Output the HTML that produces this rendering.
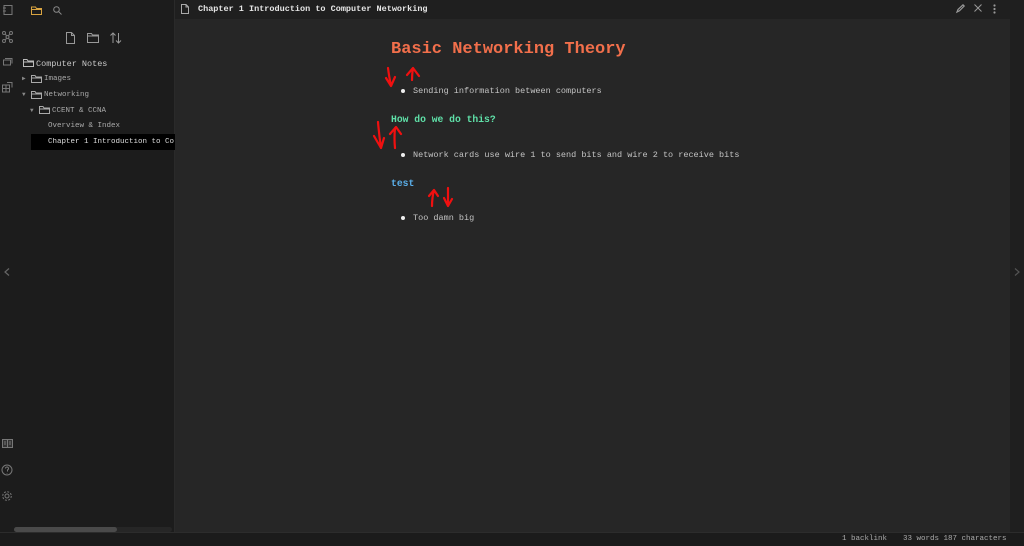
<!DOCTYPE html>
<html><head><meta charset="utf-8"><style>
*{margin:0;padding:0;box-sizing:border-box}
body{width:1024px;height:546px;overflow:hidden;background:#262626;font-family:"Liberation Mono",monospace;position:relative;color:#ccc}
.abs{position:absolute}
.rib{left:0;top:0;width:17px;height:532px;background:#1c1c1c}
.side{left:17px;top:0;width:158px;height:532px;background:#1c1c1c;border-right:1px solid #2a2a2a}
.head{left:175px;top:0;width:835px;height:19px;background:#1f1f1f}
.rstrip{left:1010px;top:0;width:14px;height:532px;background:#1f1f1f}
.status{left:0;top:532px;width:1024px;height:14px;background:#1b1b1b;border-top:1px solid #2c2c2c}
.t{position:absolute;white-space:nowrap;font-size:8.5px;color:#bdbdbd}
svg{position:absolute;overflow:visible}
</style></head><body>
<div class="abs rib"></div>
<div class="abs side"></div>
<div class="abs head"></div>
<div class="abs rstrip"></div>
<div class="abs status"></div>

<!-- ribbon icons -->
<svg style="left:3px;top:5px" width="10" height="10" fill="none" stroke="#777" stroke-width="1"><rect x="1" y="0.5" width="8" height="9"/><path d="M0 3h3M0 6h3"/></svg>
<svg style="left:2px;top:31px" width="11" height="11" fill="none" stroke="#777" stroke-width="1"><circle cx="2" cy="2" r="1.5"/><circle cx="9" cy="2" r="1.5"/><circle cx="5.5" cy="6" r="1.5"/><circle cx="2" cy="10" r="1.5"/><circle cx="9" cy="10" r="1.5"/><path d="M3 3l2 2M8 3l-2 2M3 9l2-2M8 9l-2-2"/></svg>
<svg style="left:3px;top:57px" width="10" height="9" fill="none" stroke="#777" stroke-width="1"><rect x="0.5" y="3" width="7" height="5"/><path d="M2 1.5h7v5"/></svg>
<svg style="left:2px;top:82px" width="11" height="11" fill="none" stroke="#777" stroke-width="1"><rect x="0.5" y="3" width="7" height="7"/><path d="M0.5 6.5h7M4 3v7M5 0.5h5v5"/></svg>
<svg style="left:2px;top:439px" width="11" height="9" fill="none" stroke="#777" stroke-width="1"><rect x="0.5" y="0.5" width="10" height="8" fill="#333"/><path d="M5.5 1v7M2 3h2M2 5h2M7 3h2M7 5h2"/></svg>
<svg style="left:1px;top:464px" width="12" height="12" fill="none" stroke="#777" stroke-width="1"><circle cx="6" cy="6" r="5"/><path d="M4.5 4.5a1.5 1.5 0 1 1 2 1.4V7.5M6 9v0.5"/></svg>
<svg style="left:1px;top:490px" width="12" height="12" fill="none" stroke="#777" stroke-width="1"><circle cx="6" cy="6" r="2"/><circle cx="6" cy="6" r="4.3" stroke-dasharray="2 1.4"/></svg>
<svg style="left:4px;top:268px" width="6" height="8" fill="none" stroke="#666" stroke-width="1.2"><path d="M5 0.5L1 4l4 3.5"/></svg>
<svg style="left:1014px;top:268px" width="6" height="8" fill="none" stroke="#555" stroke-width="1.2"><path d="M1 0.5L5 4 1 7.5"/></svg>

<!-- sidebar top -->
<svg style="left:31px;top:6px" width="11" height="9" fill="none" stroke="#d9a441" stroke-width="1"><path d="M0.5 1h4l1 1.5h5v6h-10z"/><path d="M0.5 3.5h10"/></svg>
<svg style="left:53px;top:6px" width="9" height="9" fill="none" stroke="#888" stroke-width="1"><circle cx="3.5" cy="3.5" r="2.8"/><path d="M5.5 5.5l3 3"/></svg>
<svg style="left:66px;top:32px" width="9" height="12" fill="none" stroke="#999" stroke-width="1"><path d="M0.5 0.5h5l3 3v8h-8z M5.5 0.5v3h3"/></svg>
<svg style="left:87px;top:33px" width="12" height="10" fill="none" stroke="#999" stroke-width="1"><path d="M0.5 0.5h4l1 1.5h6v7.5h-11z M0.5 3h11"/></svg>
<svg style="left:110px;top:32px" width="12" height="12" fill="none" stroke="#999" stroke-width="1"><path d="M3 11V1M0.5 3.5L3 1l2.5 2.5M8.5 1v10M6 8.5L8.5 11 11 8.5"/></svg>

<svg style="left:23px;top:59px" width="11" height="8" fill="none" stroke="#bbb" stroke-width="1"><path d="M0.5 0.5h3.5l1 1.5h5.5v5.5h-10z M0.5 3h10"/></svg>
<div class="t" style="left:36px;top:59px;color:#c8c8c8">Computer Notes</div>
<div class="t" style="left:22px;top:75px;font-size:6px;color:#888">▶</div>
<svg style="left:31px;top:75px" width="11" height="8" fill="none" stroke="#aaa" stroke-width="1"><path d="M0.5 0.5h3.5l1 1.5h5.5v5.5h-10z M0.5 3h10"/></svg>
<div class="t" style="left:44px;top:75px;font-size:7.5px;color:#aaa">Images</div>
<div class="t" style="left:22px;top:91px;font-size:6px;color:#888">▼</div>
<svg style="left:31px;top:91px" width="11" height="8" fill="none" stroke="#aaa" stroke-width="1"><path d="M0.5 0.5h3.5l1 1.5h5.5v5.5h-10z M0.5 3h10"/></svg>
<div class="t" style="left:44px;top:91px;font-size:7.5px;color:#aaa">Networking</div>
<div class="t" style="left:30px;top:107px;font-size:6px;color:#888">▼</div>
<svg style="left:39px;top:106px" width="11" height="8" fill="none" stroke="#aaa" stroke-width="1"><path d="M0.5 0.5h3.5l1 1.5h5.5v5.5h-10z M0.5 3h10"/></svg>
<div class="t" style="left:52px;top:107px;font-size:7.5px;color:#aaa">CCENT &amp; CCNA</div>
<div class="t" style="left:48px;top:122px;font-size:7.5px;color:#aaa">Overview &amp; Index</div>
<div class="abs" style="left:31px;top:134px;width:144px;height:16px;background:#000"></div>
<div class="t" style="left:48px;top:138px;font-size:7.5px;color:#ddd;width:126px;overflow:hidden">Chapter 1 Introduction to Computer</div>
<div class="abs" style="left:14px;top:527px;width:158px;height:5px;background:#262626;border-radius:3px"></div>
<div class="abs" style="left:14px;top:527px;width:103px;height:5px;background:#4a4a4a;border-radius:3px"></div>

<!-- header -->
<svg style="left:181px;top:4px" width="8" height="10" fill="none" stroke="#aaa" stroke-width="1"><path d="M0.5 0.5h4.5l2.5 2.5v6.5h-7z M5 0.5v2.5h2.5"/></svg>
<div class="t" style="left:198px;top:4px;font-weight:bold;color:#e6e6e6">Chapter 1 Introduction to Computer Networking</div>
<svg style="left:956px;top:4px" width="9" height="9" fill="none" stroke="#999" stroke-width="1.2"><path d="M1 8l1-2.5L7 0.8l1.2 1.2L3.5 6.8z"/></svg>
<svg style="left:974px;top:4px" width="8" height="8" fill="none" stroke="#999" stroke-width="1"><path d="M0.5 0.5l7 7M7.5 0.5l-7 7"/></svg>
<svg style="left:993px;top:4px" width="3" height="10" fill="#999"><circle cx="1.5" cy="1.5" r="1.1"/><circle cx="1.5" cy="5" r="1.1"/><circle cx="1.5" cy="8.5" r="1.1"/></svg>

<!-- content -->
<div class="t" style="left:391px;top:40px;font-size:17px;font-weight:bold;color:#f26f4b">Basic Networking Theory</div>
<div class="abs" style="left:401px;top:89px;width:4px;height:4px;border-radius:50%;background:#eee"></div>
<div class="t" style="left:413px;top:86px;color:#c4c4c4">Sending information between computers</div>
<div class="t" style="left:391px;top:114px;font-size:9.7px;font-weight:bold;color:#5fe0a8">How do we do this?</div>
<div class="abs" style="left:401px;top:153px;width:4px;height:4px;border-radius:50%;background:#eee"></div>
<div class="t" style="left:413px;top:150px;color:#c4c4c4">Network cards use wire 1 to send bits and wire 2 to receive bits</div>
<div class="t" style="left:391px;top:178px;font-size:9.7px;font-weight:bold;color:#5aaee8">test</div>
<div class="abs" style="left:401px;top:216px;width:4px;height:4px;border-radius:50%;background:#eee"></div>
<div class="t" style="left:413px;top:213px;color:#c4c4c4">Too damn big</div>

<!-- red arrows -->
<svg style="left:0;top:0" width="1024" height="546" fill="none" stroke="#f01010" stroke-width="2.2" stroke-linecap="round" stroke-linejoin="round">
<path d="M388 68q1 8 3 18M386 78l5 8 4-9"/>
<path d="M412 80q0-6 1-12M407 75l6-7 6 8"/>
<path d="M378 122q1 12 3 26M374 136l7 12 3-10"/>
<path d="M395 148q-1-10 0-20M390 134l6-7 5 7"/>
<path d="M432 206q0-8 2-16M429 196l5-6 4 6"/>
<path d="M448 188q0 8 0 18M444 198l4 8 4-7"/>
</svg>

<!-- status -->
<div class="t" style="left:842px;top:535px;font-size:7.5px;color:#aaa">1 backlink</div>
<div class="t" style="left:903px;top:535px;font-size:7.5px;color:#aaa">33 words 187 characters</div>
</body></html>
